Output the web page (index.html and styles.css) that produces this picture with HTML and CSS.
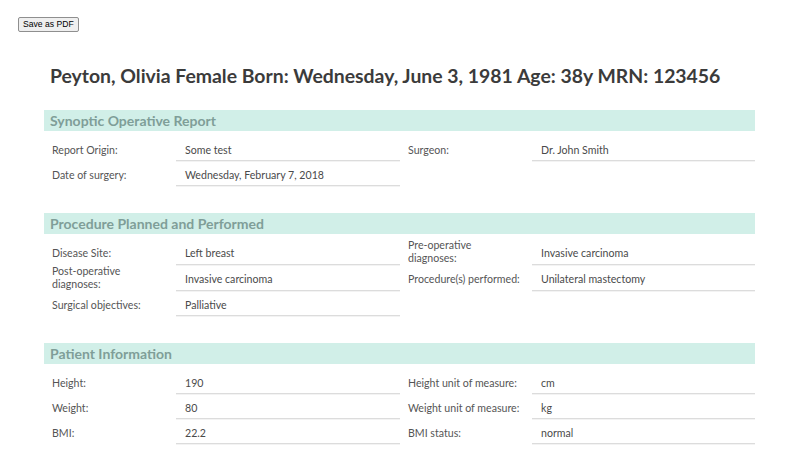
FILE: index.html
```html
<!DOCTYPE html>
<html lang="en">
<head>
  <meta charset="UTF-8">
  <title>Synoptic Operative Report</title>
  <link rel="stylesheet" href="styles.css">
</head>
<body>
  <div class="page">
    <button type="button" class="pdf-btn">Save as PDF</button>

    <h1 class="patient">Peyton, Olivia Female Born: Wednesday, June 3, 1981 Age: 38y MRN: 123456</h1>

    <div class="report">
      <section class="section">
        <h2 class="section-title">Synoptic Operative Report</h2>
        <div class="fields">
          <div class="label">Report Origin:</div>
          <div class="value">Some test</div>
          <div class="label">Surgeon:</div>
          <div class="value">Dr. John Smith</div>
          <div class="label">Date of surgery:</div>
          <div class="value">Wednesday, February 7, 2018</div>
        </div>
      </section>

      <section class="section">
        <h2 class="section-title">Procedure Planned and Performed</h2>
        <div class="fields">
          <div class="label">Disease Site:</div>
          <div class="value">Left breast</div>
          <div class="label two-line">Pre-operative<br>diagnoses:</div>
          <div class="value">Invasive carcinoma</div>
          <div class="label two-line">Post-operative<br>diagnoses:</div>
          <div class="value">Invasive carcinoma</div>
          <div class="label">Procedure(s) performed:</div>
          <div class="value">Unilateral mastectomy</div>
          <div class="label">Surgical objectives:</div>
          <div class="value">Palliative</div>
        </div>
      </section>

      <section class="section">
        <h2 class="section-title">Patient Information</h2>
        <div class="fields">
          <div class="label">Height:</div>
          <div class="value">190</div>
          <div class="label">Height unit of measure:</div>
          <div class="value">cm</div>
          <div class="label">Weight:</div>
          <div class="value">80</div>
          <div class="label">Weight unit of measure:</div>
          <div class="value">kg</div>
          <div class="label">BMI:</div>
          <div class="value">22.2</div>
          <div class="label">BMI status:</div>
          <div class="value">normal</div>
        </div>
      </section>
    </div>
  </div>
</body>
</html>
```

FILE: styles.css
```css
body { margin: 0; background: #fff; font-family: Lato, "Open Sans", sans-serif; color: #555; }
.page { padding: 17px 0 0 18px; }
.pdf-btn { display: block; font: 8.6px "Liberation Sans", Arial, sans-serif; color: #000; padding: 0 4px; height: 15px; line-height: 13px; background: #efefef; border: 1px solid #8f8f8f; border-radius: 2px; }
.patient { margin: 31px 0 21px 32px; font-size: 19.4px; line-height: 26px; font-weight: 700; color: #3b3b3b; }
.report { margin: 0 45px 0 26px; }
.section { margin-bottom: 27px; }
.section-title { margin: 0 0 5px; height: 21px; line-height: 21px; padding-left: 6px; font-size: 14px; font-weight: 700; color: #7f9e98; background: #d1efe8; }
.fields { display: grid; grid-template-columns: 132px 224px 132px 223px; grid-auto-rows: minmax(25px, auto); }
.label { padding: 3px 2px 0 8px; font-size: 10.6px; line-height: 13px; display: flex; align-items: center; }
.label.two-line { padding-top: 0; }
.value { padding: 3px 9px 0; font-size: 10.6px; color: #4a4a4a; display: flex; align-items: center; border-bottom: 1px solid #dcdcdc; box-shadow: 0 1px 0 #f3f3f3; }
```
